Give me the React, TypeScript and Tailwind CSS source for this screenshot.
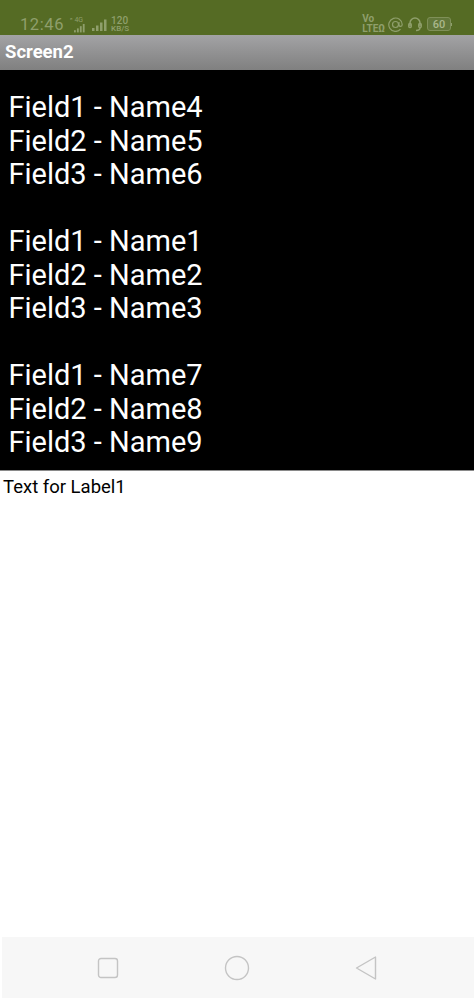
const groups = [
  ["Field1 - Name4", "Field2 - Name5", "Field3 - Name6"],
  ["Field1 - Name1", "Field2 - Name2", "Field3 - Name3"],
  ["Field1 - Name7", "Field2 - Name8", "Field3 - Name9"],
];

const SignalBars = ({ className }: { className?: string }) => (
  <svg width="15" height="12" viewBox="0 0 15 12" className={className}>
    <rect x="0" y="9" width="2.5" height="3" fill="#8f9f6c" />
    <rect x="4" y="6.5" width="2.5" height="5.5" fill="#8f9f6c" />
    <rect x="8" y="3.5" width="2.5" height="8.5" fill="#8f9f6c" />
    <rect x="12" y="0.5" width="2.5" height="11.5" fill="#8f9f6c" />
  </svg>
);

const StatusBar = () => (
  <div className="flex h-[35px] items-end justify-between bg-[#556b24] pl-[20px] pr-[22px] text-[#8f9f6c]">
    <div className="flex items-center">
      <span className="text-[16.5px] leading-[20px] tracking-[0.6px]">12:46</span>
      <div className="relative ml-[6px] h-[20px] w-[17px]">
        <span className="absolute left-0 top-[1px] text-[7px] leading-[8px] whitespace-nowrap">ᵉ 4G</span>
        <SignalBars className="absolute left-[4px] top-[8px] h-[10px] w-[11px]" />
      </div>
      <SignalBars className="ml-[5px]" />
      <div className="ml-[4px] flex flex-col text-[8px] font-medium leading-[8px]">
        <span className="text-[10px]">120</span>
        <span>KB/S</span>
      </div>
    </div>
    <div className="mb-[1px] flex items-center">
      <div className="flex flex-col text-[10px] font-bold leading-[10px]">
        <span>Vo</span>
        <span>LTEΩ</span>
      </div>
      <svg width="15" height="15" viewBox="0 0 15 15" fill="none" stroke="#8f9f6c" strokeWidth="1.2" className="ml-[3px]">
        <path d="M12.5 12.2A6.7 6.7 0 1 1 14.2 7.5c0 2.2-2.7 2.6-3.2 .5V5" />
        <circle cx="7.5" cy="7.5" r="3" />
      </svg>
      <svg width="14" height="16" viewBox="0 0 14 16" fill="none" stroke="#8f9f6c" strokeWidth="1.5" className="ml-[5px]">
        <path d="M2 10V7a5 5 0 0 1 10 0v3" />
        <rect x="0.8" y="7.5" width="2.4" height="4" rx="1" />
        <rect x="10.8" y="7.5" width="2.4" height="4" rx="1" />
        <path d="M12 11.5c0 2-1.5 3-4 3" />
      </svg>
      <div className="ml-[5px] flex h-[14px] w-[24px] items-center justify-center rounded-[3px] border border-[#7f9058] bg-[#62773a] text-[11px] font-medium leading-none text-[#aab78c]">
        60
      </div>
      <div className="h-[3px] w-[1px] bg-[#8f9f6c]" />
    </div>
  </div>
);

const NavBar = () => (
  <div className="mb-[2px] ml-[2px] mt-auto flex h-[61px] items-center bg-[#f7f7f7] pl-[95px]">
    <div className="flex items-center gap-[105px]">
      <svg width="22" height="22" viewBox="0 0 22 22" fill="none" stroke="#c4c4c4" strokeWidth="1.4">
        <rect x="1.5" y="1.5" width="19" height="19" rx="2.5" />
      </svg>
      <svg width="26" height="26" viewBox="0 0 26 26" fill="none" stroke="#c4c4c4" strokeWidth="1.4">
        <circle cx="13" cy="13" r="11.5" />
      </svg>
      <svg width="22" height="26" viewBox="0 0 22 26" fill="none" stroke="#c4c4c4" strokeWidth="1.4" strokeLinejoin="round">
        <path d="M20.5 2v22L1.5 13z" />
      </svg>
    </div>
  </div>
);

export default function App() {
  return (
    <div className="flex h-[1000px] w-[474px] flex-col overflow-hidden bg-white font-['Roboto',sans-serif]">
      <StatusBar />
      <div className="flex h-[35px] items-center bg-gradient-to-b from-[#a3a3a5] to-[#808080] pl-[5px] text-[18.5px] font-bold text-white">
        Screen2
      </div>
      <div className="flex h-[401px] flex-col gap-[33.5px] border-b border-[#8a8a8a] bg-black pl-[8.5px] pt-[21px] text-[29px] leading-[33.5px] text-white">
        {groups.map((lines) => (
          <div key={lines[0]}>
            {lines.map((line) => (
              <div key={line}>{line}</div>
            ))}
          </div>
        ))}
      </div>
      <div className="pl-[3px] pt-[6px] text-[18.5px] leading-[21px] text-black">Text for Label1</div>
      <NavBar />
    </div>
  );
}
